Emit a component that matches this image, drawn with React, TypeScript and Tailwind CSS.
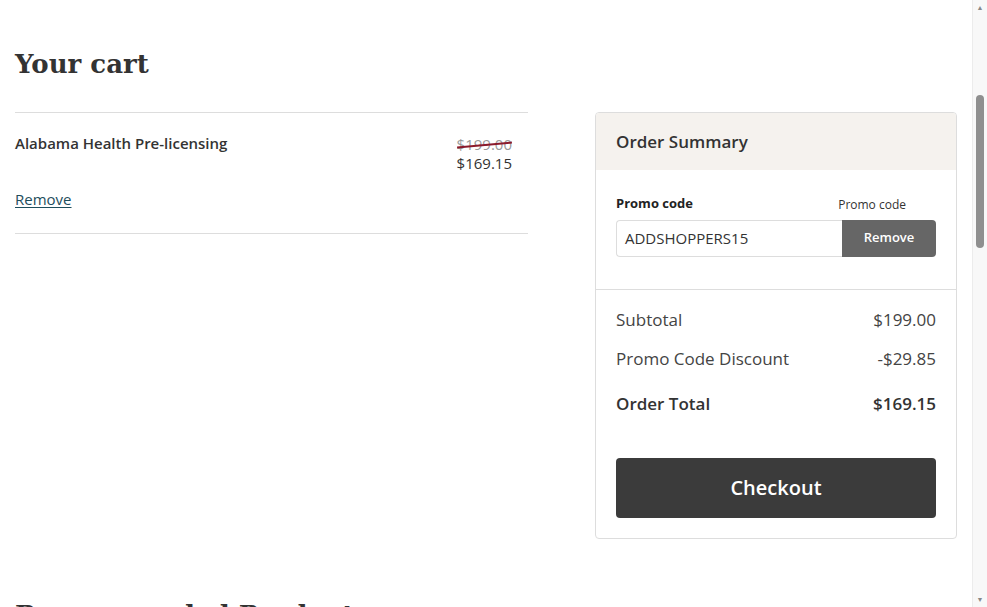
import React from 'react';

const sans = "font-['Open_Sans','Noto_Sans',sans-serif]";

const CartItem: React.FC = () => (
  <div className="border-t border-b border-[#dddddd] pt-[20px] pb-[22px]">
    <div className="flex justify-between pr-4">
      <div className="text-[15px] font-semibold text-[#333333] leading-[20px]">Alabama Health Pre-licensing</div>
      <div className="text-right text-[15px] leading-[19px] pt-[2px]">
        <div className="relative text-[#999999]">
          $199.00
          <span className="absolute left-0 right-0 top-[9px] h-[2px] bg-[#8b1a2b] -rotate-[5deg]"></span>
        </div>
        <div className="text-[#333333]">$169.15</div>
      </div>
    </div>
    <a href="#" className="inline-block mt-[15px] text-[15px] text-[#1e4d5c] underline underline-offset-2">Remove</a>
  </div>
);

const OrderSummary: React.FC = () => (
  <div className="w-[362px] border border-[#dddddd] rounded-[4px] overflow-hidden">
    <div className="bg-[#f5f2ee] h-[57px] flex items-center px-5 text-[17px] font-semibold text-[#333333]">Order Summary</div>
    <div className="px-5 pt-[24px] pb-[32px] border-b border-[#dddddd]">
      <div className="flex justify-between items-end mb-[6px] pr-[30px]">
        <span className="text-[13px] font-bold text-[#222222]">Promo code</span>
        <span className="text-[12px] text-[#333333]">Promo code</span>
      </div>
      <div className="flex h-[37px]">
        <div className="flex-1 border border-[#dddddd] border-r-0 rounded-l-[4px] flex items-center px-2 text-[15px] text-[#333333]">ADDSHOPPERS15</div>
        <button className="w-[94px] bg-[#666666] text-white text-[13px] font-semibold rounded-r-[4px]">Remove</button>
      </div>
    </div>
    <div className="px-5 pt-[11px] pb-5 text-[#333333]">
      <div className="flex justify-between text-[17px] h-[39px] items-center text-[#444444]">
        <span>Subtotal</span>
        <span>$199.00</span>
      </div>
      <div className="flex justify-between text-[17px] h-[38px] items-center text-[#444444]">
        <span>Promo Code Discount</span>
        <span>-$29.85</span>
      </div>
      <div className="flex justify-between text-[17px] h-[48px] items-center font-semibold mt-[2px]">
        <span>Order Total</span>
        <span>$169.15</span>
      </div>
      <button className="mt-[30px] w-full h-[60px] bg-[#3b3b3b] text-white text-[20px] font-semibold rounded-[4px]">Checkout</button>
    </div>
  </div>
);

const Scrollbar: React.FC = () => (
  <div className="w-[15px] shrink-0 bg-[#f8f8f8] border-l border-[#ececec] flex flex-col items-center h-[607px] sticky top-0">
    <div className="h-[15px] flex items-center justify-center text-[#888888] text-[7px] leading-none">▲</div>
    <div className="mt-[80px] w-[8px] h-[153px] rounded-full bg-[#8f8f8f]"></div>
    <div className="flex-1"></div>
    <div className="h-[15px] flex items-center justify-center text-[#888888] text-[7px] leading-none">▼</div>
  </div>
);

export default function App() {
  return (
    <div className={`${sans} bg-white h-[607px] overflow-hidden flex text-[#333333]`}>
      <div className="flex-1 px-[15px] pt-[44px]">
        <h1 className="font-['DejaVu_Serif',serif] font-bold text-[26px] leading-[40px] text-[#333333]">Your cart</h1>
        <div className="flex justify-between mt-[28px]">
          <div className="w-[513px]">
            <CartItem />
          </div>
          <OrderSummary />
        </div>
        <h2 className="font-['DejaVu_Serif',serif] font-bold text-[26px] leading-[40px] mt-[56px]">Recommended Products</h2>
      </div>
      <Scrollbar />
    </div>
  );
}
